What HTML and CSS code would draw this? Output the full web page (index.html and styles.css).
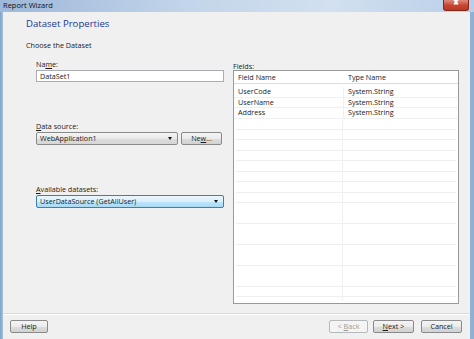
FILE: index.html
```html
<!DOCTYPE html>
<html lang="en">
<head>
  <meta charset="UTF-8" />
  <title>Report Wizard</title>
  <link rel="stylesheet" href="styles.css">
</head>
<body>
  <div class="window">
    <div class="titlebar">
      <span class="caption">Report Wizard</span>
      <span class="close-btn"></span>
    </div>

    <div class="client">
      <div class="header">
        <div class="page-title">Dataset Properties</div>
        <div class="subtitle">Choose the Dataset</div>
      </div>

      <div class="main">
        <div class="left-col">
          <div class="field">
            <label>Na<u>m</u>e:</label>
            <div class="textbox">DataSet1</div>
          </div>

          <div class="field gap">
            <label><u>D</u>ata source:</label>
            <div class="row">
              <div class="combo source">WebApplication1<span class="arrow"></span></div>
              <button class="btn new-btn">Ne<u>w</u>...</button>
            </div>
          </div>

          <div class="field gap">
            <label><u>A</u>vailable datasets:</label>
            <div class="combo focused">UserDataSource (GetAllUser)<span class="arrow"></span></div>
          </div>
        </div>

        <div class="right-col">
          <label class="fields-label">Fields:</label>
          <div class="listview">
            <div class="lv-row lv-head">
              <div class="cell name">Field Name</div>
              <div class="cell">Type Name</div>
            </div>
            <div class="lv-row">
              <div class="cell name">UserCode</div>
              <div class="cell">System.String</div>
            </div>
            <div class="lv-row">
              <div class="cell name">UserName</div>
              <div class="cell">System.String</div>
            </div>
            <div class="lv-row">
              <div class="cell name">Address</div>
              <div class="cell">System.String</div>
            </div>
            <div class="lv-fill"></div>
          </div>
        </div>
      </div>

      <div class="footer">
        <button class="btn help-btn">Help</button>
        <div class="nav">
          <button class="btn" disabled>&lt; <u>B</u>ack</button>
          <button class="btn"><u>N</u>ext &gt;</button>
          <button class="btn cancel-btn">Cancel</button>
        </div>
      </div>
    </div>
  </div>
</body>
</html>
```

FILE: styles.css
```css
html, body {
  margin: 0;
  padding: 0;
  height: 100%;
  overflow: hidden;
}

body {
  font-family: "Segoe UI", "Open Sans", "Noto Sans", sans-serif;
  font-size: 7.2px;
  color: #1a1a1a;
}

.window {
  height: 339px;
  display: flex;
  flex-direction: column;
  background: linear-gradient(to right, #7f9fc6 0px, #a9c3e0 3px, #bcd0e8 40%, #c9daee 70%, #8fb0d6 100%);
}

.titlebar {
  height: 12px;
  position: relative;
  background: linear-gradient(to right, #9db8d9, #c3d5ea 40%, #d2e0f0 70%, #b9cfe8);
}

.caption {
  position: absolute;
  left: 3px;
  top: 1px;
  font-size: 7.5px;
  line-height: 9px;
  color: #111;
}

/* red close button, only its lower part is visible */
.close-btn {
  position: absolute;
  right: 5px;
  top: 0;
  width: 26px;
  height: 11px;
  background: linear-gradient(#e08a7a, #c8432f 55%, #b93b25);
  border: 1px solid #7d2a1c;
  border-top: none;
  border-radius: 0 0 3px 3px;
  box-sizing: border-box;
}

.close-btn::before,
.close-btn::after {
  content: "";
  position: absolute;
  left: 11px;
  top: -1px;
  width: 2px;
  height: 6px;
  background: #fff;
  transform: rotate(35deg);
}

.close-btn::after {
  transform: rotate(-35deg);
}

.client {
  flex: 1;
  margin: 0 4px 0 3px;
  background: #f0f0f0;
  display: flex;
  flex-direction: column;
}

.header {
  padding: 6px 0 0 23px;
}

.page-title {
  font-size: 9.6px;
  line-height: 12px;
  color: #22378f;
}

.subtitle {
  margin-top: 11px;
  line-height: 8px;
}

.main {
  display: flex;
  gap: 9px;
  margin: 11px 11px 0 33px;
}

.left-col {
  width: 188px;
  display: flex;
  flex-direction: column;
}

.field label {
  display: block;
  line-height: 9px;
  margin-bottom: 1px;
}

.field.gap {
  margin-top: 40px;
}

.textbox {
  height: 12px;
  box-sizing: border-box;
  border: 1px solid #abadb3;
  background: #fff;
  line-height: 10px;
  padding-left: 3px;
}

.row {
  display: flex;
  gap: 3px;
}

.combo {
  position: relative;
  height: 13px;
  box-sizing: border-box;
  border: 1px solid #8a8a8a;
  border-radius: 2px;
  background: linear-gradient(#f5f5f5, #e9e9e9 50%, #dcdcdc 51%, #d6d6d6);
  line-height: 11px;
  padding-left: 3px;
}

.combo.source {
  width: 142px;
}

.combo.focused {
  border-color: #3c7fb1;
  background: linear-gradient(#eaf6fd, #d9f0fc 50%, #bee6fd 51%, #a7d9f5);
}

.arrow {
  position: absolute;
  right: 5px;
  top: 4px;
  border-left: 2.5px solid transparent;
  border-right: 2.5px solid transparent;
  border-top: 3px solid #111;
}

.btn {
  font-family: inherit;
  font-size: 7.2px;
  color: #1a1a1a;
  height: 13px;
  padding: 0;
  box-sizing: border-box;
  border: 1px solid #8a8a8a;
  border-radius: 2px;
  background: linear-gradient(#f4f4f4, #ebebeb 50%, #dddddd 51%, #d2d2d2);
  line-height: 11px;
}

.btn:disabled {
  color: #9a9a9a;
  border-color: #b5b9bc;
  background: #f4f4f4;
}

.new-btn {
  width: 41px;
}

.right-col {
  width: 226px;
  display: flex;
  flex-direction: column;
}

.fields-label {
  line-height: 8px;
  margin-top: 2px;
}

.listview {
  height: 234px;
  box-sizing: border-box;
  border: 1px solid #9a9a9a;
  background: #fff;
  display: flex;
  flex-direction: column;
}

.lv-row {
  display: flex;
  height: 9.5px;
  line-height: 9.5px;
  border-bottom: 1px solid #f0f0f0;
}

.lv-head {
  height: 12px;
  line-height: 12px;
  border-bottom: 1px solid #dcdcdc;
  margin-bottom: 3px;
}

.cell {
  padding-left: 4px;
}

.cell.name {
  width: 105px;
  border-right: 1px solid #f0f0f0;
}

.lv-head .cell.name {
  border-right-color: #fff;
}

.lv-fill {
  flex: 1;
  margin: 0 2px 2px 2px;
  background:
    linear-gradient(to right, transparent 106px, #f0f0f0 106px, #f0f0f0 107px, transparent 107px),
    repeating-linear-gradient(to bottom, transparent 0, transparent 9.5px, #efefef 9.5px, #efefef 10.5px);
}

.footer {
  margin-top: 9px;
  border-top: 1px solid #dadada;
  box-shadow: inset 0 1px 0 #fff;
  padding: 6px 8px 6px 7px;
  display: flex;
  justify-content: space-between;
}

.help-btn {
  width: 38px;
}

.nav {
  display: flex;
  gap: 5px;
}

.nav .btn {
  width: 41px;
}

.nav .btn:disabled {
  width: 39px;
}

.cancel-btn {
  margin-left: 2px;
}
```
